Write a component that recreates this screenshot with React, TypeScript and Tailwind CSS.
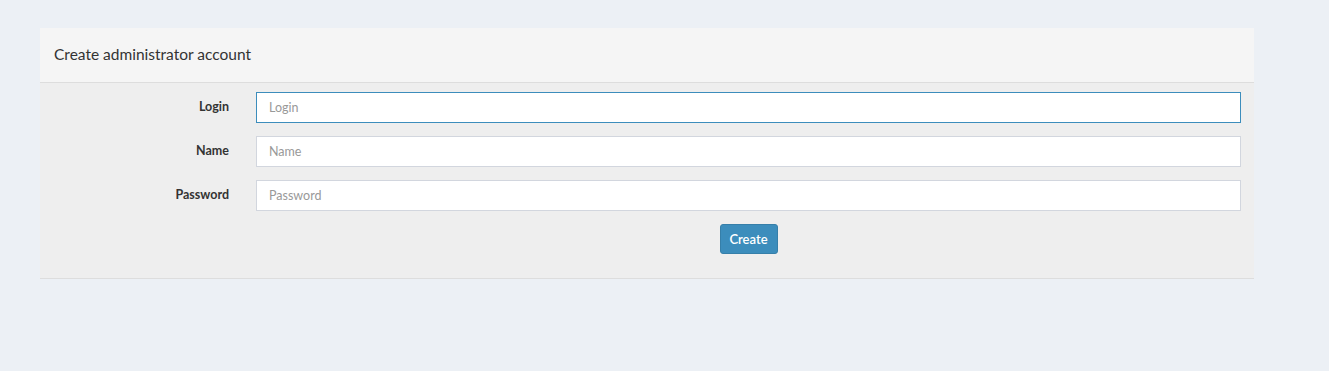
export default function App() {
  const rows = [
    { label: "Login", focus: true },
    { label: "Name", focus: false },
    { label: "Password", focus: false },
  ];
  return (
    <div
      className="w-[1329px] h-[371px] bg-[#ecf0f5] pt-[28px] pl-[40px]"
      style={{ fontFamily: "Lato, 'Open Sans', sans-serif" }}
    >
      <div className="w-[1214px]">
        <div className="h-[55px] bg-[#f5f5f5] border-b border-[#dddddd] px-[14px] pb-[1px] flex items-center">
          <span className="text-[15.5px] text-[#333]">Create administrator account</span>
        </div>
        <div className="bg-[#eeeeee] border-b border-[#dddddd] pt-[9px] pb-[24px] pr-[13px]">
          {rows.map((r) => (
            <div key={r.label} className="flex items-center mb-[13px]">
              <label className="w-[189px] text-right text-[12.5px] font-bold text-[#333] pb-[1px]">
                {r.label}
              </label>
              <input
                placeholder={r.label}
                className={`ml-[27px] flex-1 h-[31px] bg-white px-[12px] text-[12.5px] text-[#555] placeholder:text-[#999] outline-none border ${
                  r.focus ? "border-[#3c8dbc]" : "border-[#d2d6de]"
                }`}
              />
            </div>
          ))}
          <div className="flex">
            <div className="w-[216px]" />
            <div className="flex-1 flex justify-center">
              <button className="w-[58px] h-[30px] bg-[#3c8dbc] border border-[#367fa9] rounded-[3px] text-white text-[13px] font-semibold pt-[1px]">
                Create
              </button>
            </div>
          </div>
        </div>
      </div>
    </div>
  );
}
